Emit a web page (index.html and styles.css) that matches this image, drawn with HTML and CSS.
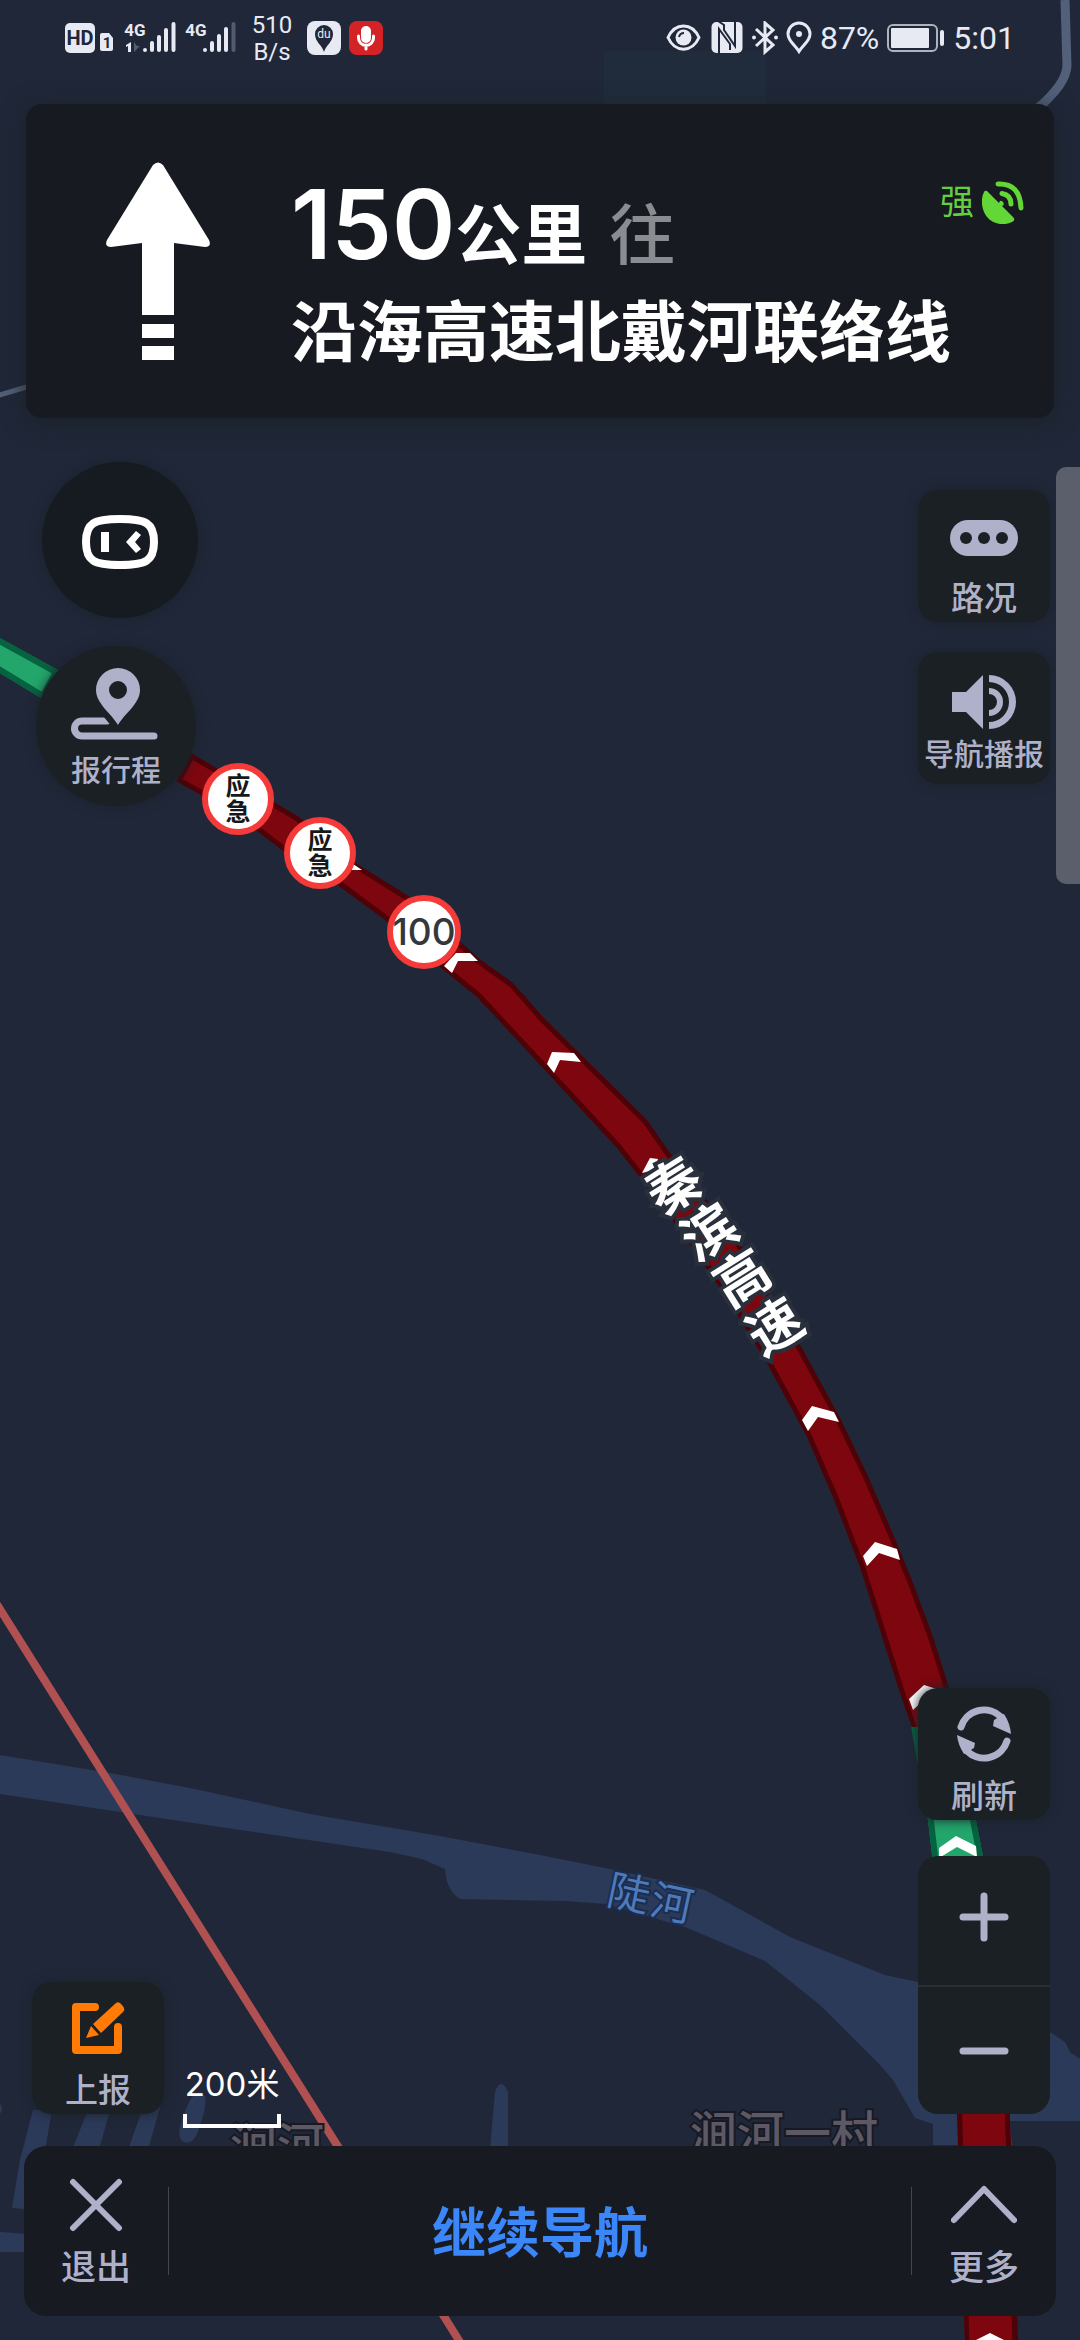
FILE: index.html
```html
<!DOCTYPE html>
<html lang="zh-CN">
<head>
<meta charset="utf-8">
<meta name="viewport" content="width=device-width, initial-scale=1">
<title>导航</title>
<link rel="stylesheet" href="styles.css">
</head>
<body>
<div class="app">
  <svg class="map" viewBox="0 0 1080 2340" preserveAspectRatio="xMidYMin slice" role="img" aria-label="地图">
    <defs>
      <clipPath id="clip-red"><path d="M191 753L299 817L357 864L410 897L462 943L478 958L513 983L543 1017L573 1047L647 1120L670 1153L740 1243L803 1350L840 1418L867 1474L893 1534L913 1583L933 1637L949 1688L960 1727H912L900 1693L880 1630L860 1567L833 1497L807 1437L767 1363L730 1303L690 1244L638 1175L617 1148L543 1068L477 997L440 967L389 923L339 886L282 850L257 831L201 795L176 781Z"/></clipPath>
      <clipPath id="clip-green"><path d="M911 1727H960L976 1820L983 1856L996 1950L1006 2050H954L945 1950L932 1856L928 1821Z"/></clipPath>
      <clipPath id="clip-tail"><path d="M1007 2050L1011 2145L1018 2340H965L958 2145L955 2050Z"/></clipPath>
      <clipPath id="clip-far"><path d="M-20 627L60 671L44 700L-20 661Z"/></clipPath>
    </defs>
    <rect class="block" x="604" y="51" width="162" height="60"/>
    <path class="minor" d="M1065 0L1067 66Q1066 84 1038 108"/>
    <path class="minor thin" d="M-4 396L30 386"/>
    <g class="water">
      <path d="M0 1755L110 1773L190 1788L310 1814L440 1836L540 1855L615 1870L705 1890L790 1937L885 1975L918 1982L1050 2032L1065 2042L1070 2052L1080 2059V2121H1010L1012 2145H933V2124L915 2118L893 2080L880 2065L820 2005L765 1961L685 1927L606 1904L565 1901L460 1899Q446 1890 445 1869L422 1859L390 1852L200 1824L0 1794Z"/>
      <path d="M33 2110L52 2110L46 2145L24 2209L12 2208L20 2160Z"/>
      <path d="M88 2110H110L99 2150H72Z"/>
      <path d="M142 2110L162 2100L148 2150H128Z"/>
      <path d="M182 2141Q176 2133 184 2115Q192 2089 202 2093Q210 2097 200 2125Q194 2148 182 2141Z"/>
      <path d="M490 2150L495 2092Q501 2076 508 2092V2150Z"/>
      <path d="M0 2232L30 2234V2252H0Z"/>
      <path d="M0 2104Q4 2108 0 2114Z"/>
    </g>
    <path class="rail" d="M-4 1603L57 1700L337 2145L460 2342"/>
    <g class="place">
      <text x="690" y="2150">涧河一村</text>
      <text x="230" y="2162">涧河</text>
    </g>
    <g class="river-name">
      <text transform="translate(629 1893) rotate(12)">陡</text>
      <text transform="translate(672 1903) rotate(12)">河</text>
    </g>
    <g class="route">
      <path class="clear" clip-path="url(#clip-far)" d="M-20 627L60 671L44 700L-20 661Z"/>
      <path class="clear" clip-path="url(#clip-green)" d="M911 1700H960L976 1820L983 1856L996 1950L1006 2080H954L945 1950L932 1856L928 1821Z"/>
      <path class="jam" clip-path="url(#clip-tail)" d="M1007 2030L1011 2145L1018 2360H965L958 2145L955 2030Z"/>
      <path class="jam" clip-path="url(#clip-red)" d="M191 753L299 817L357 864L410 897L462 943L478 958L513 983L543 1017L573 1047L647 1120L670 1153L740 1243L803 1350L840 1418L867 1474L893 1534L913 1583L933 1637L949 1688L966 1747H918L900 1693L880 1630L860 1567L833 1497L807 1437L767 1363L730 1303L690 1244L638 1175L617 1148L543 1068L477 997L440 967L389 923L339 886L282 850L257 831L201 795L176 781Z"/>
    </g>
    <g class="heading">
      <path d="M350 862L362 870L352 870Z"/>
      <path d="M456 953H470L478 961H458L452 973L444 966Z"/>
      <path d="M552 1052L574 1053L581 1062L560 1060L554 1073L547 1064Z"/>
      <path d="M650 1158L658 1159L654 1170L642 1173Z"/>
      <path d="M812 1406L834 1412L839 1422L818 1417L808 1431L802 1420Z"/>
      <path d="M875 1542L897 1549L900 1560L879 1553L867 1566L863 1556Z"/>
      <path d="M924 1685L946 1692L949 1702L927 1697L913 1710L909 1699Z"/>
      <path d="M956 1836L976 1846L977 1857L957 1847L939 1858V1848Z"/>
      <path d="M990 2333L1010 2343H970Z"/>
    </g>
    <g class="road-name">
      <text transform="translate(674 1186) rotate(-32)">秦</text>
      <text transform="translate(709 1232) rotate(-32)">滨</text>
      <text transform="translate(742 1278) rotate(-32)">高</text>
      <text transform="translate(775 1327) rotate(-32)">速</text>
    </g>
    <g class="sign">
      <circle cx="238" cy="799" r="33"/>
      <text x="238" y="795">应</text><text x="238" y="821">急</text>
      <circle cx="320" cy="853" r="33"/>
      <text x="320" y="849">应</text><text x="320" y="875">急</text>
      <circle cx="424" cy="932" r="34"/>
      <text class="limit" x="424" y="945">100</text>
    </g>
  </svg>

  <header class="status">
    <div class="status-side">
      <svg width="112" height="46" viewBox="65 15 112 46" aria-hidden="true">
        <rect class="ink" x="65" y="23" width="30" height="30" rx="5"/>
        <text class="tag dark" x="80" y="45">HD</text>
        <path class="ink" d="M102 33H109L113 38V49Q113 51 111 51H102Q100 51 100 49V35Q100 33 102 33Z"/>
        <text class="tag tiny dark" x="107" y="48">1</text>
        <text class="tag net" x="135" y="36">4G</text>
        <path class="ink" d="M126 45L131 42V52H128V46L126 47Z"/>
        <path class="dim-fill" d="M134 42V52L140 46H137Z"/>
        <path class="bars" d="M145 50V50.1M152 50V43M159 50V37M166 50V30M173.500 50V24"/>
      </svg>
      <svg width="52" height="46" viewBox="186 15 52 46" aria-hidden="true">
        <text class="tag net" x="197" y="36">4G</text>
        <path class="bars" d="M206 50V50.1M213 50V43M220 50V36M227 50V29"/>
        <path class="bars dim" d="M234.500 50V24"/>
      </svg>
      <p class="rate">510<br>B/s</p>
      <svg width="34" height="34" viewBox="0 0 34 34" aria-hidden="true">
        <rect class="ink" width="34" height="34" rx="8"/>
        <path class="dark" d="M17 31C15 24 8 21 8 13A9 9 0 0 1 26 13C26 21 19 24 17 31Z"/>
        <text class="tag du" x="17" y="17">du</text>
      </svg>
      <svg width="34" height="34" viewBox="0 0 34 34" aria-hidden="true">
        <rect class="rec" width="34" height="34" rx="8"/>
        <rect class="snow" x="12" y="5" width="10" height="17" rx="5"/>
        <path class="mic" d="M9.500 15V17A7.500 7.500 0 0 0 24.500 17V15M17 24V28"/>
      </svg>
    </div>
    <div class="status-side">
      <svg width="112" height="34" viewBox="666 21 112 34" aria-hidden="true">
        <path class="wire" d="M668 37.500C675 22 692 22 699 37.500C692 53 675 53 668 37.500Z"/>
        <circle class="ink" cx="683.500" cy="37.500" r="8"/><path class="notch" d="M679 37Q680 33 684 33"/>
        <rect class="ink" x="711.500" y="22" width="31" height="31" rx="5"/>
        <path class="slit" d="M719 54V29L730 44V50M735 21V46L724 30V25L718 21"/>
        <path class="wire" d="M756 29L773 45L765 52V23L773 30L756 46"/>
        <circle class="ink" cx="754" cy="37.500" r="2"/><circle class="ink" cx="776" cy="37.500" r="2"/>
      </svg>
      <svg width="26" height="34" viewBox="786 21 26 34" aria-hidden="true">
        <path class="wire" d="M799 51.500C795 45 788 41 788 34A11 11 0 0 1 810 34C810 41 803 45 799 51.500Z"/>
        <circle class="ink" cx="799" cy="34" r="3"/>
      </svg>
      <span class="level">87%</span>
      <svg width="58" height="28" viewBox="0 0 58 28" aria-hidden="true">
        <rect class="cell" x="1" y="1" width="49" height="26" rx="5"/>
        <rect class="ink" x="4" y="4" width="38" height="20" rx="1"/>
        <rect class="ink" x="53" y="6" width="4" height="16" rx="2"/>
      </svg>
      <time class="clock">5:01</time>
    </div>
  </header>

  <section class="guide">
    <svg class="turn" width="106" height="200" viewBox="0 0 106 200" aria-hidden="true">
      <path d="M48 3Q53 -2 58 3L104 78Q107 85 100 85L69 81V153H37V81L6 85Q-1 85 2 78Z"/>
      <path d="M37 162H69V176H37ZM37 184H69V198H37Z"/>
    </svg>
    <div class="guide-text">
      <p class="distance"><span class="number">150</span>公里<span class="toward">往</span></p>
      <h1 class="road">沿海高速北戴河联络线</h1>
    </div>
    <p class="gps">强
      <svg width="42" height="43" viewBox="0 0 42 43" aria-hidden="true">
        <path class="gps-fill" d="M5 10L17 22Q18 18 21 21Q23 24 20 25L31 36Q34 39 30 41C20 46 8 42 3 33C-1 25 -1 17 2 11Q3 9 5 10Z"/>
        <path class="gps-line" d="M20 12.500Q29 14 29 23M16 3Q38 2 39 27"/>
      </svg>
    </p>
  </section>

  <main class="stage">
    <div class="rail-left">
      <button class="orb" type="button" aria-label="语音助手">
        <svg width="76" height="54" viewBox="0 0 76 54" aria-hidden="true">
          <path class="face" d="M38 4C64 4 72 8 72 27S64 50 38 50S4 46 4 27S12 4 38 4Z"/>
          <path class="snow" d="M19 17H27V37H19ZM44 27L54 16L59 20L53 27L59 34L54 38Z"/>
        </svg>
      </button>
      <button class="orb trip" type="button">
        <svg width="88" height="74" viewBox="0 0 88 74" aria-hidden="true">
          <path class="track" d="M37 53H12A7.500 7.500 0 0 0 12 68H84"/>
          <path class="gap" d="M34 46L48 63"/>
          <path class="glyph" fill-rule="evenodd" d="M48 57C42 46 26 36 26 22A22 22 0 0 1 70 22C70 36 54 46 48 57ZM48 13A9 9 0 1 0 48 31A9 9 0 1 0 48 13Z"/>
        </svg>
        <span>报行程</span>
      </button>
      <div class="corner">
        <button class="tile report" type="button">
          <svg width="56" height="56" viewBox="0 0 56 56" aria-hidden="true">
            <path class="edit-line" d="M25 7H6V50H48V27"/>
            <path class="edit-pen" d="M46 3Q49 1 52 5Q56 9 53 12L31 33L23 24ZM21 26L29 35L16 38Z"/>
          </svg>
          <span>上报</span>
        </button>
        <p class="scale">200米</p>
      </div>
    </div>
    <div class="rail-right">
      <button class="tile" type="button">
        <svg width="70" height="56" viewBox="0 0 70 56" aria-hidden="true">
          <rect class="glyph" x="1" y="8" width="68" height="36" rx="18"/>
          <g class="tile-ink"><circle cx="17" cy="26" r="6"/><circle cx="35" cy="26" r="6"/><circle cx="53" cy="26" r="6"/></g>
        </svg>
        <span>路况</span>
      </button>
      <button class="tile voice" type="button">
        <svg width="66" height="56" viewBox="0 0 66 56" aria-hidden="true">
          <path class="glyph" d="M1 18H15L32 1V55L15 38H1ZM38 1A27 27 0 0 1 38 55V48A20 20 0 0 0 38 8ZM38 14A14 14 0 0 1 38 42V36A8 8 0 0 0 38 20Z"/>
        </svg>
        <span>导航播报</span>
      </button>
      <button class="tile refresh" type="button">
        <svg width="56" height="56" viewBox="0 0 56 56" aria-hidden="true">
          <path class="track" d="M5 21A24 24 0 0 1 45 11M51 35A24 24 0 0 1 11 45"/>
          <path class="glyph" d="M38 14L48 8Q54 17 55 28L37 20ZM18 42L8 48Q2 39 1 29L19 37Z"/>
        </svg>
        <span>刷新</span>
      </button>
      <div class="zoom">
        <button type="button" aria-label="放大"><svg width="50" height="50" viewBox="0 0 50 50"><path class="track" d="M4 25H46M25 4V46"/></svg></button>
        <button type="button" aria-label="缩小"><svg width="50" height="50" viewBox="0 0 50 50"><path class="track" d="M4 25H46"/></svg></button>
      </div>
    </div>
    <div class="drawer"></div>
  </main>

  <footer class="dock">
    <button class="dock-side" type="button">
      <svg width="66" height="54" viewBox="0 0 66 54" aria-hidden="true"><path class="line" d="M10 4L56 50M56 4L10 50"/></svg>
      <span>退出</span>
    </button>
    <button class="resume" type="button">继续导航</button>
    <button class="dock-side" type="button">
      <svg width="66" height="54" viewBox="0 0 66 54" aria-hidden="true"><path class="line" d="M3 42L33 11L63 42"/></svg>
      <span>更多</span>
    </button>
  </footer>
</div>
</body>
</html>
```

FILE: styles.css
```css
:root {
  --map: #202738;
  --panel: #171a20;
  --tile: #1b2025;
  --soft: #aeb1c9;
  --status: #e7eaf3;
}

* { box-sizing: border-box; }

body {
  margin: 0;
  background: var(--map);
  color: #fff;
  font-family: Inter, "Noto Sans CJK SC", sans-serif;
}

p, h1 { margin: 0; }

svg { display: block; flex: none; }

button {
  margin: 0;
  padding: 0;
  border: 0;
  background: none;
  color: inherit;
  font: inherit;
  cursor: pointer;
}

.app {
  position: relative;
  display: flex;
  flex-direction: column;
  min-height: 100vh;
  padding: 0 24px 24px;
  overflow: hidden;
}

/* map canvas */
.map {
  position: absolute;
  inset: 0;
  width: 100%;
  height: 100%;
}

.block { fill: #202c3b; }
.minor { fill: none; stroke: #536079; stroke-width: 9; }
.minor.thin { stroke-width: 5; }
.water { fill: #2b3a59; }
.rail { fill: none; stroke: #b05050; stroke-width: 8; }
.clear { fill: #23a66b; stroke: #05633f; stroke-width: 12; }
.jam { fill: #7e060f; stroke: #4c0207; stroke-width: 10; }
.heading { fill: #fff; }

.place text {
  fill: #5c5964;
  stroke: #171a24;
  stroke-width: 4px;
  paint-order: stroke;
  font-size: 47px;
  font-weight: 500;
}

.river-name text {
  fill: #4d7ab9;
  stroke: #1b2d50;
  stroke-width: 4px;
  paint-order: stroke;
  font-size: 42px;
  text-anchor: middle;
  dominant-baseline: central;
}

.road-name text {
  fill: #fff;
  stroke: #29303c;
  stroke-width: 8px;
  paint-order: stroke;
  font-size: 54px;
  font-weight: 700;
  text-anchor: middle;
  dominant-baseline: central;
}

.sign circle { fill: #fff; stroke: #f53a3a; stroke-width: 6; }
.sign text { fill: #16181c; font-size: 25px; font-weight: 700; text-anchor: middle; }
.sign .limit { fill: #34383c; font-size: 37px; font-weight: 500; }

/* status bar */
.status {
  position: relative;
  display: flex;
  justify-content: space-between;
  height: 104px;
  padding: 10px 41px 0;
  color: var(--status);
  font-family: Roboto, sans-serif;
}

.status-side { display: flex; align-items: center; gap: 8px; height: 56px; }
.rate { width: 54px; padding-top: 2px; font-size: 24px; line-height: 27px; text-align: center; }
.level, .clock { font-size: 32px; line-height: 40px; }
.ink { fill: var(--status); }
.dark { fill: #202738; }
.snow { fill: #fff; }
.rec { fill: #d42327; }
.tag { fill: var(--status); font-size: 20px; font-weight: 700; text-anchor: middle; }
.tag.dark { fill: #202738; }
.tag.tiny { font-size: 15px; }
.tag.net { font-size: 17px; }
.tag.du { font-size: 12px; font-weight: 400; }
.bars { fill: none; stroke: var(--status); stroke-width: 4; stroke-linecap: round; }
.bars.dim { stroke: #535b6c; }
.dim-fill { fill: #535b6c; }
.mic { fill: none; stroke: #fff; stroke-width: 3; stroke-linecap: round; }
.wire { fill: none; stroke: var(--status); stroke-width: 3; }
.notch { fill: none; stroke: #202738; stroke-width: 2; }
.slit { fill: none; stroke: #202738; stroke-width: 2; }
.cell { fill: none; stroke: #aeb3c0; stroke-width: 2; }

/* guidance banner */
.guide {
  position: relative;
  display: flex;
  align-items: flex-start;
  height: 314px;
  margin: 0 2px;
  padding: 58px 30px 0 79px;
  border-radius: 16px;
  background: var(--panel);
  box-shadow: 0 4px 24px #1a2228;
}

.turn { fill: #fff; }
.guide-text { flex: 1; margin-left: 80px; padding-top: 6px; font-weight: 700; }
.distance { display: flex; align-items: baseline; height: 116px; font-size: 66px; line-height: 112px; }
.number { font-size: 96px; font-weight: 600; }
.toward { margin-left: 22px; color: #898c90; font-weight: 500; }
.road { height: 96px; font-size: 66px; font-weight: 700; line-height: 96px; white-space: nowrap; }
.gps { display: flex; align-items: center; gap: 8px; margin: 16px 0 0 -12px; color: #63d13f; font-size: 34px; line-height: 48px; }
.gps-fill { fill: #63d736; }
.gps-line { fill: none; stroke: #63d736; stroke-width: 5; stroke-linecap: round; }

/* floating controls */
.stage {
  position: relative;
  display: flex;
  flex: 1;
  justify-content: space-between;
  padding: 44px 6px 18px 8px;
}

.rail-left, .rail-right { display: flex; flex-direction: column; }
.rail-left { align-items: flex-start; gap: 28px; }
.rail-right { padding: 28px 0 14px; gap: 30px; }

.orb {
  display: flex;
  flex-direction: column;
  align-items: center;
  justify-content: center;
  width: 156px;
  height: 156px;
  margin-left: 10px;
  padding-top: 4px;
  border-radius: 50%;
  background: #161b21;
  box-shadow: 0 0 12px #1a222b;
}

.trip {
  justify-content: flex-start;
  gap: 6px;
  width: 160px;
  height: 160px;
  margin-left: 4px;
  padding-top: 22px;
  background: #1b2024;
  color: var(--soft);
  font-size: 30px;
  font-weight: 500;
  line-height: 44px;
}

.trip svg { margin-right: 4px; }
.face { fill: none; stroke: #fff; stroke-width: 8; }
.glyph { fill: var(--soft); }
.track { fill: none; stroke: var(--soft); stroke-width: 7; stroke-linecap: round; }
.gap { fill: none; stroke: #1b2024; stroke-width: 4; }
.tile-ink { fill: var(--tile); }

.tile {
  display: flex;
  flex-direction: column;
  align-items: center;
  gap: 8px;
  width: 132px;
  height: 132px;
  padding-top: 22px;
  border-radius: 20px;
  background: var(--tile);
  box-shadow: 0 0 12px #1a222b;
  color: var(--soft);
  font-size: 33px;
  font-weight: 500;
  line-height: 44px;
}

.voice { gap: 2px; font-size: 30px; white-space: nowrap; }
.refresh, .report { gap: 12px; padding-top: 18px; }
.refresh { margin-top: auto; }
.report { margin-bottom: 14px; }

.zoom {
  display: flex;
  flex-direction: column;
  margin-top: 6px;
  border-radius: 20px;
  background: var(--tile);
}

.zoom button { display: flex; align-items: center; justify-content: center; height: 129px; }
.zoom button:first-child { padding-bottom: 8px; }
.zoom button + button { border-top: 2px solid #2a2f35; }

.corner { display: flex; align-items: flex-end; gap: 22px; margin-top: auto; }
.edit-line { fill: none; stroke: #ff7b05; stroke-width: 8; stroke-linecap: round; stroke-linejoin: round; }
.edit-pen { fill: #ff7b05; }

.scale {
  display: flex;
  flex-direction: column;
  align-items: center;
  gap: 10px;
  width: 92px;
  font-size: 33px;
  line-height: 40px;
  white-space: nowrap;
}

.scale::after {
  content: "";
  width: 90px;
  height: 10px;
  border: solid #fff;
  border-width: 0 4px 4px;
}

.drawer {
  position: absolute;
  top: 49px;
  right: -24px;
  width: 24px;
  height: 417px;
  border-radius: 10px 0 0 10px;
  background: #5a5f6b;
}

/* bottom bar */
.dock {
  position: relative;
  display: flex;
  align-items: center;
  height: 170px;
  border-radius: 22px;
  background: var(--panel);
}

.dock-side {
  display: flex;
  flex-direction: column;
  align-items: center;
  width: 144px;
  padding-top: 18px;
  color: var(--soft);
  font-size: 35px;
  font-weight: 500;
  line-height: 70px;
}

.line { fill: none; stroke: var(--soft); stroke-width: 6; stroke-linecap: round; stroke-linejoin: round; }

.resume {
  flex: 1;
  height: 88px;
  padding-top: 6px;
  border: solid #43464d;
  border-width: 0 1px;
  color: #3b86f8;
  font-size: 54px;
  font-weight: 700;
  line-height: 82px;
}
```
